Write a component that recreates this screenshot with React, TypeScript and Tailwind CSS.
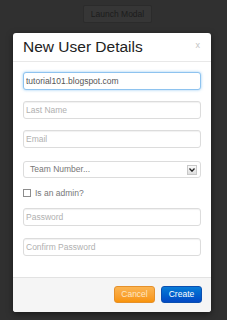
import React from "react";

const fields = ["Last Name", "Email"];

function TextInput({
  placeholder,
  value,
  focused,
  className = "",
}: {
  placeholder: string;
  value?: string;
  focused?: boolean;
  className?: string;
}) {
  return (
    <input
      readOnly
      defaultValue={value}
      placeholder={placeholder}
      className={`block h-[18px] w-[178px] rounded-[3px] border bg-white px-[2px] text-[8.5px] text-[#555] outline-none placeholder:text-[#b0b0b0] ${
        focused
          ? "border-[#8ec3ef] shadow-[0_0_3px_rgba(82,168,236,0.6)]"
          : "border-[#dcdcdc] shadow-[inset_0_1px_1px_rgba(0,0,0,0.06)]"
      } ${className}`}
    />
  );
}

export default function App() {
  return (
    <div
      className="h-[320px] w-[227px] overflow-hidden bg-[#303030]"
      style={{ fontFamily: '"Liberation Sans", Arial, sans-serif' }}
    >
      <div className="flex justify-center pt-[5px]">
        <button className="ml-[8px] h-[18px] w-[69px] rounded-[2px] border border-[#2b2b2b] bg-[#363636] text-[8.5px] text-[#1c1c1c]">
          Launch Modal
        </button>
      </div>

      <div className="ml-[13px] mt-[10px] w-[198px] overflow-hidden rounded-[3px] bg-white shadow-[0_2px_6px_rgba(0,0,0,0.5)]">
        <div className="flex h-[29px] items-center justify-between border-b border-[#e8e8e8] pl-[10px] pr-[11px]">
          <span className="text-[15.5px] leading-none text-[#222]">New User Details</span>
          <span className="mb-[2px] text-[9px] text-[#c4c4c4]">x</span>
        </div>

        <div className="flex flex-col pl-[10px] pt-[10px] pb-[21px]">
          <TextInput placeholder="" value="tutorial101.blogspot.com" focused />
          {fields.map((f) => (
            <TextInput key={f} placeholder={f} className="mt-[11px]" />
          ))}
          <div className="mt-[13px] flex h-[17px] w-[178px] items-center justify-between rounded-[3px] border border-[#dcdcdc] bg-white pl-[6px] pr-[3px]">
            <span className="text-[8.5px] text-[#777]">Team Number...</span>
            <span className="flex h-[10px] w-[10px] items-center justify-center border border-[#c8c8c8] bg-gradient-to-b from-[#fafafa] to-[#dedede]">
              <svg width="6" height="4" viewBox="0 0 6 4">
                <path d="M0.5 0.5 L3 3.2 L5.5 0.5" fill="none" stroke="#222" strokeWidth="1.3" />
              </svg>
            </span>
          </div>
          <label className="mt-[11px] flex items-center gap-[4px]">
            <span className="h-[8px] w-[8px] border border-[#8c8c8c] bg-white" />
            <span className="text-[8.5px] leading-none text-[#777]">Is an admin?</span>
          </label>
          <TextInput placeholder="Password" className="mt-[10px]" />
          <TextInput placeholder="Confirm Password" className="mt-[12px]" />
        </div>

        <div className="flex h-[35px] items-center justify-end gap-[6px] border-t border-[#e2e2e2] bg-[#f5f5f5] pr-[9px]">
          <button className="h-[17px] w-[41px] rounded-[3px] border border-[#e5902a] bg-gradient-to-b from-[#fbb450] to-[#f89406] text-[8.5px] text-[#fde7c4]">
            Cancel
          </button>
          <button className="h-[17px] w-[41px] rounded-[3px] border border-[#0a4fb0] bg-gradient-to-b from-[#0a7bd6] to-[#0548c4] text-[8.5px] text-white">
            Create
          </button>
        </div>
      </div>
    </div>
  );
}
